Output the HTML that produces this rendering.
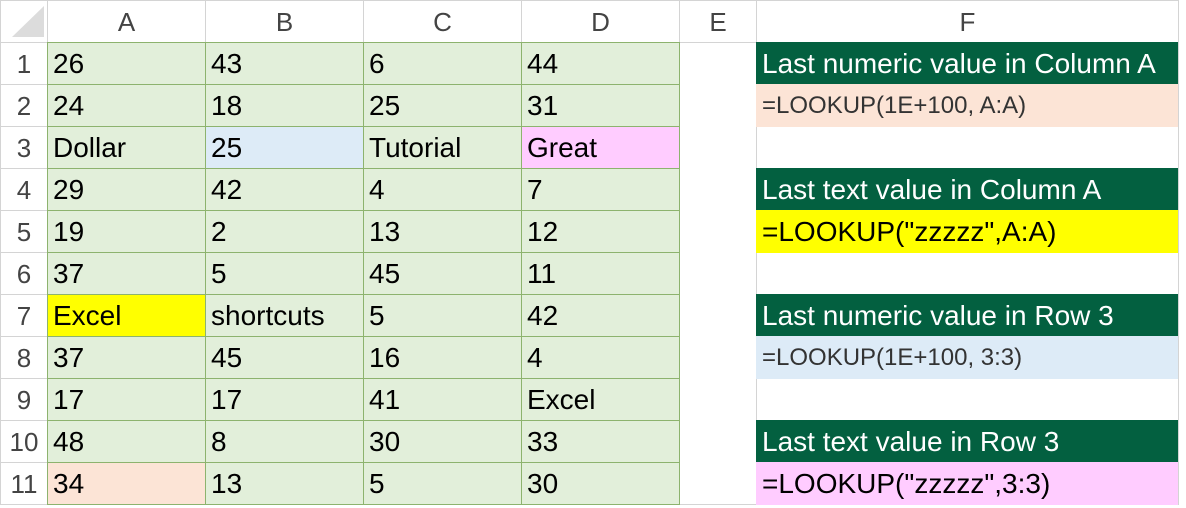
<!DOCTYPE html><html><head><style>
body{margin:0;width:1186px;height:508px;background:#fff;overflow:hidden;position:relative;font-family:"Liberation Sans",sans-serif}
.c{position:absolute;box-sizing:border-box;height:43px;line-height:42px;padding-left:5px;font-size:28px;color:#000;white-space:nowrap;border:1px solid #d4d4d4;}
.g{background:#e2efda;border-color:#8db36e}
.h{color:#444;text-align:center;padding:0;font-size:26px;border-color:#d4d4d4;background:#fff}
.r{color:#444;text-align:center;padding:0;font-size:26px;width:48px;left:0;background:#fff}
.dk{background:#036040;color:#fff;border-color:#036040}
.f{font-size:24px;color:#333}
</style></head><body>
<div class="c h" style="left:0;top:0;width:48px;height:43px"></div>
<svg style="position:absolute;left:10px;top:4px" width="35" height="34"><polygon points="34,2 34,33 2,33" fill="#dcdcdc"/></svg>
<div class="c h" style="left:47px;top:0;width:159px">A</div>
<div class="c h" style="left:205px;top:0;width:159px">B</div>
<div class="c h" style="left:363px;top:0;width:159px">C</div>
<div class="c h" style="left:521px;top:0;width:159px">D</div>
<div class="c h" style="left:679px;top:0;width:78px">E</div>
<div class="c h" style="left:756px;top:0;width:423px">F</div>
<div class="c r" style="top:42px">1</div><div class="c r" style="top:84px">2</div><div class="c r" style="top:126px">3</div><div class="c r" style="top:168px">4</div><div class="c r" style="top:210px">5</div><div class="c r" style="top:252px">6</div><div class="c r" style="top:294px">7</div><div class="c r" style="top:336px">8</div><div class="c r" style="top:378px">9</div><div class="c r" style="top:420px">10</div><div class="c r" style="top:462px">11</div>
<div class="c" style="left:679px;top:42px;width:78px;height:463px"></div>
<div class="c" style="left:756px;top:42px;width:423px;height:463px"></div>

<div class="c g" style="left:47px;top:42px;width:159px">26</div><div class="c g" style="left:205px;top:42px;width:159px">43</div><div class="c g" style="left:363px;top:42px;width:159px">6</div><div class="c g" style="left:521px;top:42px;width:159px">44</div>
<div class="c g" style="left:47px;top:84px;width:159px">24</div><div class="c g" style="left:205px;top:84px;width:159px">18</div><div class="c g" style="left:363px;top:84px;width:159px">25</div><div class="c g" style="left:521px;top:84px;width:159px">31</div>
<div class="c g" style="left:47px;top:126px;width:159px">Dollar</div><div class="c g" style="left:205px;top:126px;width:159px;background:#ddebf7">25</div><div class="c g" style="left:363px;top:126px;width:159px">Tutorial</div><div class="c g" style="left:521px;top:126px;width:159px;background:#ffccff">Great</div>
<div class="c g" style="left:47px;top:168px;width:159px">29</div><div class="c g" style="left:205px;top:168px;width:159px">42</div><div class="c g" style="left:363px;top:168px;width:159px">4</div><div class="c g" style="left:521px;top:168px;width:159px">7</div>
<div class="c g" style="left:47px;top:210px;width:159px">19</div><div class="c g" style="left:205px;top:210px;width:159px">2</div><div class="c g" style="left:363px;top:210px;width:159px">13</div><div class="c g" style="left:521px;top:210px;width:159px">12</div>
<div class="c g" style="left:47px;top:252px;width:159px">37</div><div class="c g" style="left:205px;top:252px;width:159px">5</div><div class="c g" style="left:363px;top:252px;width:159px">45</div><div class="c g" style="left:521px;top:252px;width:159px">11</div>
<div class="c g" style="left:47px;top:294px;width:159px;background:#ffff00">Excel</div><div class="c g" style="left:205px;top:294px;width:159px">shortcuts</div><div class="c g" style="left:363px;top:294px;width:159px">5</div><div class="c g" style="left:521px;top:294px;width:159px">42</div>
<div class="c g" style="left:47px;top:336px;width:159px">37</div><div class="c g" style="left:205px;top:336px;width:159px">45</div><div class="c g" style="left:363px;top:336px;width:159px">16</div><div class="c g" style="left:521px;top:336px;width:159px">4</div>
<div class="c g" style="left:47px;top:378px;width:159px">17</div><div class="c g" style="left:205px;top:378px;width:159px">17</div><div class="c g" style="left:363px;top:378px;width:159px">41</div><div class="c g" style="left:521px;top:378px;width:159px">Excel</div>
<div class="c g" style="left:47px;top:420px;width:159px">48</div><div class="c g" style="left:205px;top:420px;width:159px">8</div><div class="c g" style="left:363px;top:420px;width:159px">30</div><div class="c g" style="left:521px;top:420px;width:159px">33</div>
<div class="c g" style="left:47px;top:462px;width:159px;background:#fce4d6">34</div><div class="c g" style="left:205px;top:462px;width:159px">13</div><div class="c g" style="left:363px;top:462px;width:159px">5</div><div class="c g" style="left:521px;top:462px;width:159px">30</div>

<div class="c dk" style="left:756px;top:42px;width:422px">Last numeric value in Column A</div>
<div class="c f" style="left:756px;top:84px;width:422px;background:#fce4d6;border-color:#fce4d6">=LOOKUP(1E+100, A:A)</div>
<div class="c dk" style="left:756px;top:168px;width:422px">Last text value in Column A</div>
<div class="c" style="left:756px;top:210px;width:422px;background:#ffff00;border-color:#ffff00">=LOOKUP("zzzzz",A:A)</div>
<div class="c dk" style="left:756px;top:294px;width:422px">Last numeric value in Row 3</div>
<div class="c f" style="left:756px;top:336px;width:422px;background:#ddebf7;border-color:#ddebf7">=LOOKUP(1E+100, 3:3)</div>
<div class="c dk" style="left:756px;top:420px;width:422px">Last text value in Row 3</div>
<div class="c" style="left:756px;top:462px;width:422px;background:#ffccff;border-color:#ffccff">=LOOKUP("zzzzz",3:3)</div>
</body></html>
